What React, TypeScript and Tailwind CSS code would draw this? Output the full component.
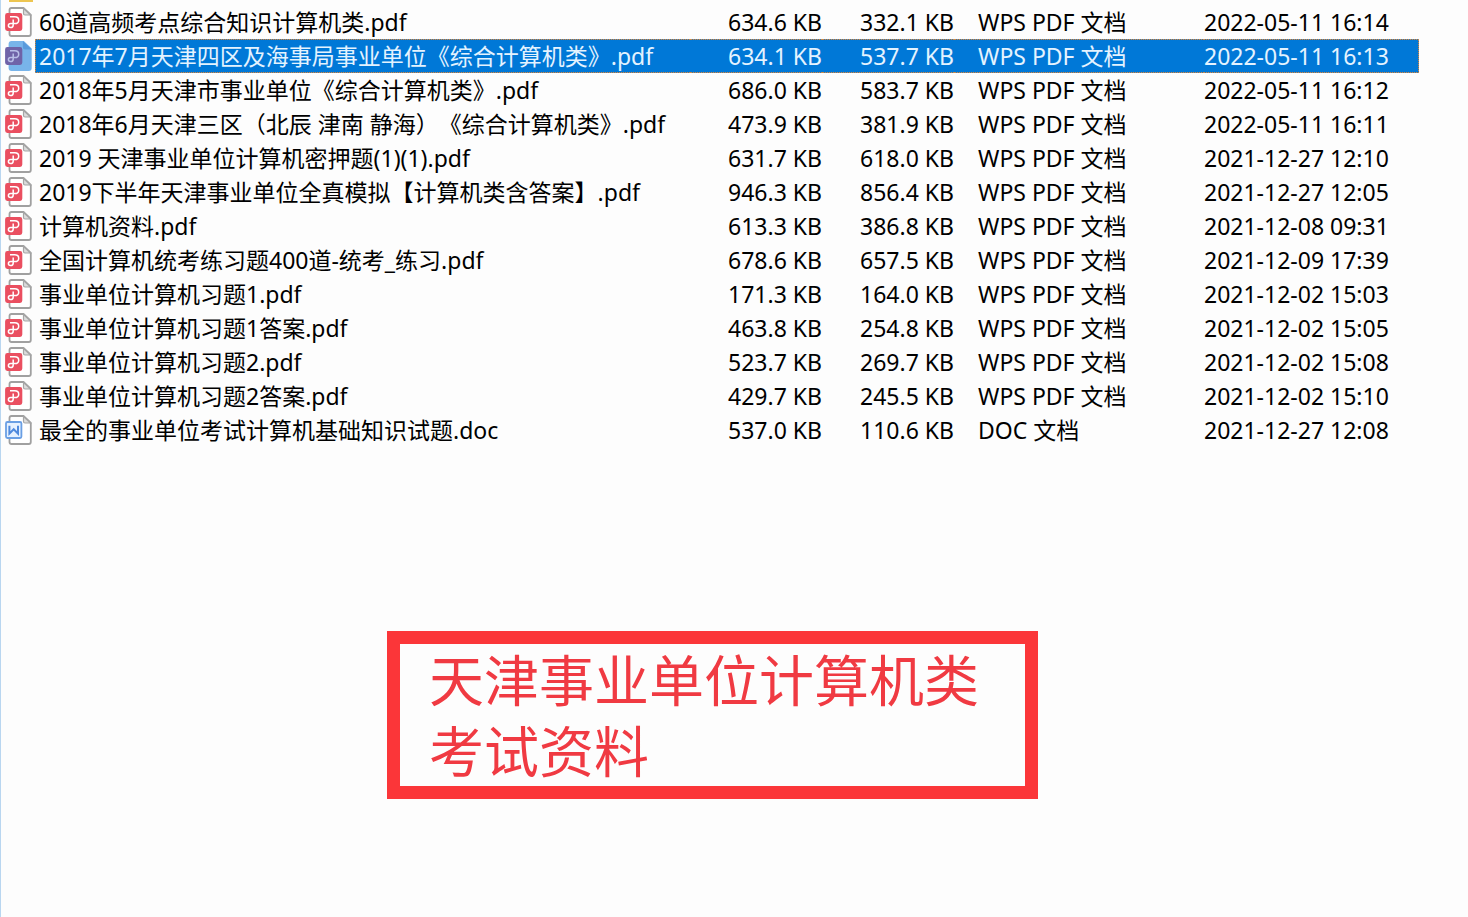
type FileKind = 'pdf' | 'doc'

type FileRow = {
  name: string
  size: string
  packed: string
  type: string
  date: string
  kind: FileKind
  selected?: boolean
}

const pdf = (name: string, size: string, packed: string, date: string, selected = false): FileRow => ({
  name,
  size: size + ' KB',
  packed: packed + ' KB',
  type: 'WPS PDF 文档',
  date,
  kind: 'pdf',
  selected,
})

const files: FileRow[] = [
  pdf('60道高频考点综合知识计算机类.pdf', '634.6', '332.1', '2022-05-11 16:14'),
  pdf('2017年7月天津四区及海事局事业单位《综合计算机类》.pdf', '634.1', '537.7', '2022-05-11 16:13', true),
  pdf('2018年5月天津市事业单位《综合计算机类》.pdf', '686.0', '583.7', '2022-05-11 16:12'),
  pdf('2018年6月天津三区（北辰 津南 静海）《综合计算机类》.pdf', '473.9', '381.9', '2022-05-11 16:11'),
  pdf('2019 天津事业单位计算机密押题(1)(1).pdf', '631.7', '618.0', '2021-12-27 12:10'),
  pdf('2019下半年天津事业单位全真模拟【计算机类含答案】.pdf', '946.3', '856.4', '2021-12-27 12:05'),
  pdf('计算机资料.pdf', '613.3', '386.8', '2021-12-08 09:31'),
  pdf('全国计算机统考练习题400道-统考_练习.pdf', '678.6', '657.5', '2021-12-09 17:39'),
  pdf('事业单位计算机习题1.pdf', '171.3', '164.0', '2021-12-02 15:03'),
  pdf('事业单位计算机习题1答案.pdf', '463.8', '254.8', '2021-12-02 15:05'),
  pdf('事业单位计算机习题2.pdf', '523.7', '269.7', '2021-12-02 15:08'),
  pdf('事业单位计算机习题2答案.pdf', '429.7', '245.5', '2021-12-02 15:10'),
  {
    name: '最全的事业单位考试计算机基础知识试题.doc',
    size: '537.0 KB',
    packed: '110.6 KB',
    type: 'DOC 文档',
    date: '2021-12-27 12:08',
    kind: 'doc',
  },
]

function FileIcon({ kind, selected }: { kind: FileKind; selected?: boolean }) {
  const badge = kind === 'doc' ? '#e6f1ff' : selected ? '#6f63a8' : '#ea4f60'
  const badgeEdge = kind === 'doc' ? '#6a9fe4' : badge
  const mark = kind === 'doc' ? '#4f8ade' : selected ? '#b9bfe8' : '#ffffff'
  return (
    <svg className="block h-[30px] w-[27px]" viewBox="0 0 27 30" fill="none" aria-hidden="true">
      <path
        d="M6.5 1H18.5L25.8 8V27Q25.8 29 23.8 29H6.5Q4.5 29 4.5 27V3Q4.5 1 6.5 1Z"
        fill={selected ? '#78b4ea' : '#ffffff'}
        stroke={selected ? '#78b4ea' : '#a0a0a0'}
        strokeWidth="1.8"
      />
      <path
        d="M18.5 1.5V6.5Q18.5 8 20 8H25.5Z"
        fill={selected ? '#5a9bdc' : '#dcdcdc'}
        stroke={selected ? '#5a9bdc' : '#a6a6a6'}
        strokeWidth="1.2"
      />
      <rect x="1" y="7" width="15.4" height="16" rx="1.4" fill={badge} stroke={badgeEdge} strokeWidth="1.8" />
      {kind === 'pdf' ? (
        <path
          d="M5 9.8H9.8Q13.7 9.8 13.7 13.2Q13.7 16.6 9.8 16.6H5.8Q3.4 16.6 3.4 18.6Q3.4 20.6 5.6 20.6Q8.2 20.6 8.2 18V12.4"
          stroke={mark}
          strokeWidth="1.5"
        />
      ) : (
        <path d="M4.4 10.8V18.6L8.7 14.2L13 18.6V10.8" stroke={mark} strokeWidth="2" />
      )}
    </svg>
  )
}

const plainCell = 'border-y border-transparent p-0'
const selectedCell = 'border-y border-dotted border-[#c98a4c] bg-[#0078d7] bg-clip-padding p-0 text-[#e4f3ff]'

export default function App() {
  return (
    <main className="min-h-screen overflow-x-hidden border-l border-[#b9d6f0] bg-[#fdfdfd] font-['Noto_Sans','Noto_Sans_CJK_SC',sans-serif] text-black [text-spacing-trim:space-all]">
      <div className="h-[5px] pl-[8px]">
        <div className="h-[2px] w-6 bg-[#edc550]" />
      </div>
      <table
        aria-label="文件"
        className="w-[calc(100%-49px)] table-fixed border-separate border-spacing-0 text-left text-[23px] leading-[32px] whitespace-nowrap"
      >
        <colgroup>
          <col className="w-[34px]" />
          <col />
          <col className="w-[132px]" />
          <col className="w-[132px]" />
          <col className="w-[250px]" />
          <col className="w-[215px]" />
        </colgroup>
        <tbody>
          {files.map((file) => {
            const cell = file.selected ? selectedCell : plainCell
            return (
              <tr key={file.name} aria-selected={file.selected} className={file.selected ? 'bg-linear-to-r from-transparent from-[34px] to-[#3a76a8] to-[34px]' : ''}>
                <td className="p-0 pl-[4px]">
                  <FileIcon kind={file.kind} selected={file.selected} />
                </td>
                <td className={file.selected ? cell + ' border-l' : cell}>
                  <div className={file.selected ? 'pl-[3px]' : 'pl-[4px]'}>{file.name}</div>
                </td>
                <td className={cell + ' text-right'}>{file.size}</td>
                <td className={cell + ' text-right'}>{file.packed}</td>
                <td className={cell}>
                  <div className="pl-[24px]">{file.type}</div>
                </td>
                <td className={file.selected ? cell + ' border-r' : cell}>{file.date}</td>
              </tr>
            )
          })}
        </tbody>
      </table>
      <section className="mt-[184px] ml-[386px] w-[651px] max-w-full border-[13px] border-[#fb3639] px-[29px] text-[55px] leading-[71px] text-[#f03a42]">
        <p>
          天津事业单位计算机类
          <br />
          考试资料
        </p>
      </section>
    </main>
  )
}
